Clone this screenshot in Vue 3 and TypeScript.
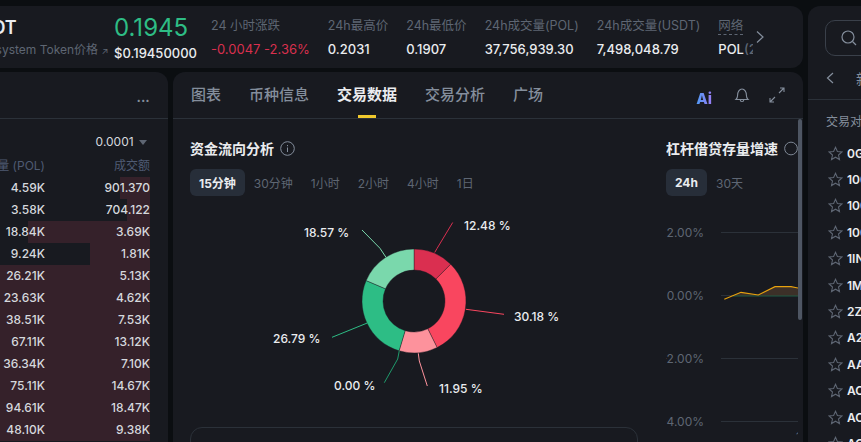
<template>
  <div class="viewport">
    <div class="page">
      <header class="ticker">
        <div class="title">
          <div class="symbol">POL/USDT</div>
          <div class="token">Polygon Ecosystem Token价格 <span class="arrow">↗</span></div>
        </div>
        <div class="price">
          <div class="last">0.1945</div>
          <div class="usd">$0.19450000</div>
        </div>
        <div class="stats">
          <div v-for="s in stats" :key="s.label" class="stat">
            <div class="stat-label" :class="{ dashed: s.dashed }">{{ s.label }}</div>
            <div class="stat-value" :class="{ down: s.down }">
              {{ s.value }}<span v-if="s.extra" class="muted"> {{ s.extra }}</span>
            </div>
          </div>
        </div>
        <svg class="next" width="10" height="14" viewBox="0 0 10 14" fill="none">
          <path d="M2 1.5 8 7l-6 5.5" stroke="#848e9c" stroke-width="1.2" />
        </svg>
      </header>

      <aside class="book">
        <div class="book-head"><span class="dots">•••</span></div>
        <div class="book-step">0.0001 <i class="caret"></i></div>
        <div class="book-cols">
          <span class="qty">数量 (POL)</span>
          <span class="amount">成交额</span>
        </div>
        <div v-for="r in trades" :key="r.qty" class="trade">
          <i class="depth" :style="{ width: r.depth + 'px' }"></i>
          <span class="qty">{{ r.qty }}</span>
          <span class="amount">{{ r.amount }}</span>
        </div>
      </aside>

      <main class="main">
        <nav class="tabs">
          <a v-for="t in tabs" :key="t" class="tab" :class="{ active: t === '交易数据' }">{{ t }}</a>
          <div class="tools">
            <span class="ai">Ai</span>
            <svg width="18" height="18" viewBox="0 0 18 18" fill="none" stroke="#848e9c" stroke-width="1.1">
              <path d="M3 13.5c1.2-1 1.6-2 1.6-4.2C4.600 6 6.400 3 9 3s4.400 3 4.400 6.300c0 2.200.4 3.200 1.600 4.200z" />
              <path d="M7.200 13.800c0 2.300 3.600 2.300 3.600 0" />
            </svg>
            <svg width="18" height="18" viewBox="0 0 18 18" fill="none" stroke="#848e9c" stroke-width="1.1">
              <path d="M2 16 7 11M2 12v4h4M16 2l-5 5M12 2h4v4" />
            </svg>
          </div>
        </nav>
        <div class="content">
          <section class="flow">
            <h3 class="heading">
              资金流向分析
              <svg width="15" height="15" viewBox="0 0 15 15" fill="none" stroke="#848e9c">
                <circle cx="7.500" cy="7.500" r="6.800" />
                <path d="M7.500 6.500v4.500M7.500 4v1.200" />
              </svg>
            </h3>
            <div class="periods">
              <button v-for="(p, i) in periods" :key="p" class="period" :class="{ on: i === 0 }">{{ p }}</button>
            </div>
            <svg class="donut" viewBox="190 205 448 222">
              <path v-for="s in slices" :key="s.color" :d="s.d" :fill="s.color" stroke="#181a20" stroke-width="0.4" />
              <polyline
                v-for="l in leaders"
                :key="l.text"
                :points="l.points"
                :stroke="l.color"
                fill="none"
                stroke-width="1"
              />
              <text v-for="l in leaders" :key="l.text + 't'" class="pct" :x="l.x" :y="l.y">{{ l.text }}</text>
            </svg>
            <div class="box"></div>
          </section>
          <section class="margin">
            <h3 class="heading nowrap">
              杠杆借贷存量增速
              <svg width="15" height="15" viewBox="0 0 15 15" fill="none" stroke="#848e9c">
                <circle cx="7.500" cy="7.500" r="6.800" />
              </svg>
            </h3>
            <div class="periods">
              <button class="period on">24h</button>
              <button class="period">30天</button>
            </div>
            <svg class="line" viewBox="665 205 132 240">
              <g v-for="g in grid" :key="g.label">
                <line x1="720" x2="797" :y1="g.y" :y2="g.y" stroke="#2b3139" />
                <text class="axis" x="703" :y="g.y + 4" text-anchor="end">{{ g.label }}</text>
              </g>
              <path d="M731 296 740 292.300 757.300 295 774 286.700 790 286.700 797 288V296z" fill="#3c3028" />
              <line x1="732" x2="797" y1="296" y2="296" stroke="#1f5a45" />
              <polyline points="723.300,299.300 740,292.300 757.300,295 774,286.700 790,286.700 797,288" fill="none" stroke="#e8a20e" stroke-width="1.200" />
              <text class="axis" x="795" y="441">1</text>
            </svg>
          </section>
        </div>
        <i class="scroll"></i>
      </main>

      <aside class="market">
        <div class="search">
          <svg width="18" height="18" viewBox="0 0 18 18" fill="none" stroke="#848e9c" stroke-width="1.200">
            <circle cx="8" cy="8" r="6" />
            <path d="m12.500 12.500 3.500 3.500" />
          </svg>
          <span>搜索</span>
        </div>
        <div class="crumbs">
          <svg width="8" height="12" viewBox="0 0 8 12" fill="none" stroke="#848e9c" stroke-width="1.200">
            <path d="M7 1 1.500 6 7 11" />
          </svg>
          <span>新币榜</span>
        </div>
        <div class="pair-head">交易对</div>
        <div v-for="p in pairs" :key="p" class="pair">
          <svg width="15" height="15" viewBox="0 0 24 24" fill="none" stroke="#5e6673" stroke-width="1.700">
            <path d="m12 2 3 6.800 7.300.7-5.500 4.900 1.600 7.300-6.400-3.800-6.400 3.800 1.600-7.300L1.700 9.500 9 8.800z" />
          </svg>
          <span>{{ p }}</span>
        </div>
      </aside>
    </div>
  </div>
</template>

<script setup lang="ts">
import { computed } from 'vue'

const stats = [
  { label: '24 小时涨跌', value: '-0.0047 -2.36%', down: true },
  { label: '24h最高价', value: '0.2031' },
  { label: '24h最低价', value: '0.1907' },
  { label: '24h成交量(POL)', value: '37,756,939.30' },
  { label: '24h成交量(USDT)', value: '7,498,048.79' },
  { label: '网络', value: 'POL', extra: '(2 链)', dashed: true },
]

const trades = [
  { qty: '4.59K', amount: '901.370', depth: 30 },
  { qty: '3.58K', amount: '704.122', depth: 23 },
  { qty: '18.84K', amount: '3.69K', depth: 122 },
  { qty: '9.24K', amount: '1.81K', depth: 60 },
  { qty: '26.21K', amount: '5.13K', depth: 180 },
  { qty: '23.63K', amount: '4.62K', depth: 180 },
  { qty: '38.51K', amount: '7.53K', depth: 180 },
  { qty: '67.11K', amount: '13.12K', depth: 180 },
  { qty: '36.34K', amount: '7.10K', depth: 180 },
  { qty: '75.11K', amount: '14.67K', depth: 180 },
  { qty: '94.61K', amount: '18.47K', depth: 180 },
  { qty: '48.10K', amount: '9.38K', depth: 180 },
]

const tabs = ['图表', '币种信息', '交易数据', '交易分析', '广场']
const periods = ['15分钟', '30分钟', '1小时', '2小时', '4小时', '1日']

const flows = [
  { pct: 12.48, color: '#da2f50' },
  { pct: 30.18, color: '#f9465f' },
  { pct: 11.95, color: '#fd929c' },
  { pct: 26.79, color: '#2dbd85' },
  { pct: 18.57, color: '#7ad8ac' },
]

const slices = computed(() => {
  const cx = 414
  const cy = 301
  const outer = 52
  const inner = 31
  let start = 0
  const at = (r: number, a: number) => `${cx + r * Math.sin(a)} ${cy - r * Math.cos(a)}`
  return flows.map((f) => {
    const from = (start / 100) * Math.PI * 2
    start += f.pct * (100 / 99.97)
    const to = (start / 100) * Math.PI * 2
    const large = to - from > Math.PI ? 1 : 0
    return {
      color: f.color,
      d: `M${at(outer, from)}A${outer} ${outer} 0 ${large} 1 ${at(outer, to)}L${at(inner, to)}A${inner} ${inner} 0 ${large} 0 ${at(inner, from)}Z`,
    }
  })
})

const leaders = [
  { text: '12.48 %', x: 464, y: 230, color: '#da2f50', points: '434.700,252.500 437,248.500 452.700,222.500' },
  { text: '30.18 %', x: 514, y: 321, color: '#f9465f', points: '466,309.300 504,314.300' },
  { text: '11.95 %', x: 439, y: 393, color: '#fd929c', points: '418.300,353.300 419.300,361 427.300,386' },
  { text: '0.00 %', x: 334, y: 390, color: '#1f9a6c', points: '399.300,350.700 397.700,359 384.300,382.700' },
  { text: '26.79 %', x: 273, y: 343, color: '#2dbd85', points: '367.300,323 332,337.300' },
  { text: '18.57 %', x: 304, y: 237, color: '#7ad8ac', points: '386,257.300 380,248.300 362,230' },
]

const grid = [
  { label: '2.00%', y: 232.500 },
  { label: '0.00%', y: 295.500 },
  { label: '-2.00%', y: 358.500 },
  { label: '-4.00%', y: 421.500 },
]

const pairs = [
  '0G/USDT',
  '1000CAT/USDT',
  '1000CHEEMS/USDT',
  '1000SATS/USDT',
  '1INCH/USDT',
  '1MBABYDOGE/USDT',
  '2Z/USDT',
  'A2Z/USDT',
  'AAVE/USDT',
  'ACA/USDT',
  'ACE/USDT',
  'ACH/USDT',
]
</script>

<style>
html,
body {
  margin: 0;
  overflow: hidden;
  background: #0b0e11;
}
</style>

<style scoped>
.viewport {
  width: 861px;
  height: 442px;
  overflow: hidden;
  font-family: Inter, 'Noto Sans CJK SC', sans-serif;
  color: #eaecef;
}

.page {
  display: grid;
  grid-template-columns: 400px 630px 300px;
  grid-template-rows: 62px 1fr;
  gap: 4px 5px;
  width: 1340px;
  height: 436px;
  margin-left: -232px;
  padding-top: 6px;
}

.ticker {
  grid-column: 1 / 3;
  display: flex;
  align-items: center;
  background: #181a20;
  border-radius: 12px;
  padding-left: 157px;
}

.title {
  width: 189px;
  flex: none;
}

.symbol {
  font-size: 18px;
  font-weight: 600;
  line-height: 24px;
}

.token {
  margin-top: 2px;
  font-size: 12px;
  line-height: 16px;
  color: #5e6673;
  white-space: nowrap;
}

.arrow {
  font-size: 9px;
}

.price {
  flex: none;
  width: 97px;
}

.last {
  font-size: 24px;
  line-height: 28px;
  color: #2ebd85;
}

.usd {
  margin-top: 3px;
  font-size: 13px;
  font-weight: 500;
  line-height: 16px;
  white-space: nowrap;
}

.stats {
  display: flex;
  gap: 18px;
  width: 542px;
  overflow: hidden;
  white-space: nowrap;
}

.stat-label {
  font-size: 12.500px;
  line-height: 18px;
  color: #5e6673;
}

.stat-label.dashed {
  width: max-content;
  border-bottom: 1px dashed #5e6673;
  line-height: 17px;
}

.stat-value {
  margin-top: 6px;
  font-size: 13px;
  font-weight: 500;
  line-height: 16px;
}

.stat-value.down {
  color: #d9304e;
  font-weight: 400;
}

.muted {
  color: #5e6673;
}

.next {
  margin-left: 2px;
}

.book {
  background: #181a20;
  border-radius: 12px 12px 0 0;
  padding-right: 18px;
  overflow: hidden;
}

.book-head {
  height: 46px;
  margin-right: -18px;
  padding-right: 18px;
  border-bottom: 1px solid #2b3139;
  text-align: right;
  line-height: 50px;
}

.dots {
  color: #848e9c;
  font-size: 7px;
  letter-spacing: 0.5px;
}

.book-step {
  margin-top: 14px;
  padding-right: 3px;
  font-size: 12px;
  line-height: 18px;
  text-align: right;
  color: #d5d8dd;
}

.caret {
  display: inline-block;
  margin: 0 0 1px 2px;
  border: 4px solid transparent;
  border-top: 5px solid #5e6673;
  border-bottom: 0;
}

.book-cols {
  display: flex;
  justify-content: flex-end;
  margin-top: 4px;
  height: 22px;
  font-size: 12px;
  line-height: 22px;
  color: #4f5b73;
}

.trade {
  position: relative;
  display: flex;
  justify-content: flex-end;
  height: 22px;
  font-size: 12px;
  font-weight: 500;
  line-height: 22px;
  color: #d5d8dd;
}

.depth {
  position: absolute;
  top: 0;
  right: 0;
  bottom: 0;
  background: #35212a;
}

.qty {
  position: relative;
  width: 90px;
  text-align: right;
  white-space: nowrap;
}

.amount {
  position: relative;
  width: 105px;
  text-align: right;
}

.main {
  position: relative;
  background: #181a20;
  border-radius: 12px 12px 0 0;
  overflow: hidden;
}

.tabs {
  display: flex;
  align-items: center;
  gap: 28px;
  height: 46px;
  padding-left: 18px;
  border-bottom: 1px solid #2b3139;
}

.tab {
  position: relative;
  font-size: 15px;
  font-weight: 500;
  line-height: 46px;
  color: #848e9c;
}

.tab.active {
  color: #eaecef;
  font-weight: 700;
}

.tab.active::after {
  content: '';
  position: absolute;
  left: 21px;
  bottom: 0;
  width: 18px;
  height: 3px;
  background: #f0c92d;
}

.tools {
  display: flex;
  align-items: center;
  gap: 17px;
  margin-left: auto;
  padding-right: 17px;
}

.ai {
  font-size: 15px;
  font-weight: 800;
  margin-top: 6px;
  margin-right: 4px;
  background: linear-gradient(90deg, #4d9bf5, #9a7cf5);
  -webkit-background-clip: text;
  background-clip: text;
  color: transparent;
}

.content {
  display: flex;
  padding-left: 17px;
}

.flow {
  flex: none;
  width: 476px;
}

.margin {
  width: 132px;
  overflow: hidden;
}

.heading {
  display: flex;
  align-items: center;
  gap: 6px;
  margin: 18px 0 0;
  height: 22px;
  font-size: 14px;
  font-weight: 700;
  white-space: nowrap;
}

.periods {
  display: flex;
  margin-top: 10px;
}

.period {
  height: 27px;
  padding: 0 9px;
  border: 0;
  border-radius: 6px;
  background: transparent;
  font: inherit;
  font-size: 12px;
  color: #5e6673;
  white-space: nowrap;
}

.period.on {
  background: #272e39;
  color: #eaecef;
  font-weight: 700;
}

.donut {
  display: block;
  width: 448px;
  height: 222px;
  margin-top: 9px;
}

.pct {
  font-size: 12px;
  font-weight: 500;
  fill: #eaecef;
}

.box {
  width: 448px;
  height: 60px;
  border: 1px solid #2b3139;
  border-radius: 12px;
  box-sizing: border-box;
}

.line {
  display: block;
  width: 132px;
  height: 240px;
  margin-top: 9px;
}

.axis {
  font-size: 12px;
  fill: #5e6673;
}

.scroll {
  position: absolute;
  top: 47px;
  right: 1px;
  width: 4px;
  height: 201px;
  border-radius: 2px;
  background: #4e5663;
}

.market {
  grid-column: 3;
  grid-row: 1 / 3;
  background: #181a20;
  border-radius: 12px 0 0 0;
  overflow: hidden;
  white-space: nowrap;
}

.search {
  display: flex;
  align-items: center;
  gap: 8px;
  height: 34px;
  margin: 14px 12px 0 17px;
  padding-left: 14px;
  border: 1px solid #3a404a;
  border-radius: 10px;
  font-size: 13px;
  color: #5e6673;
}

.crumbs {
  display: flex;
  align-items: center;
  gap: 22px;
  height: 43px;
  padding-left: 18px;
  border-bottom: 1px solid #2b3139;
  font-size: 14px;
  color: #848e9c;
}

.pair-head {
  padding: 13px 0 0 18px;
  height: 27px;
  font-size: 12px;
  line-height: 18px;
  color: #848e9c;
}

.pair {
  display: flex;
  align-items: center;
  gap: 4px;
  height: 26.400px;
  padding-left: 20px;
  font-size: 12px;
  font-weight: 600;
}
</style>
